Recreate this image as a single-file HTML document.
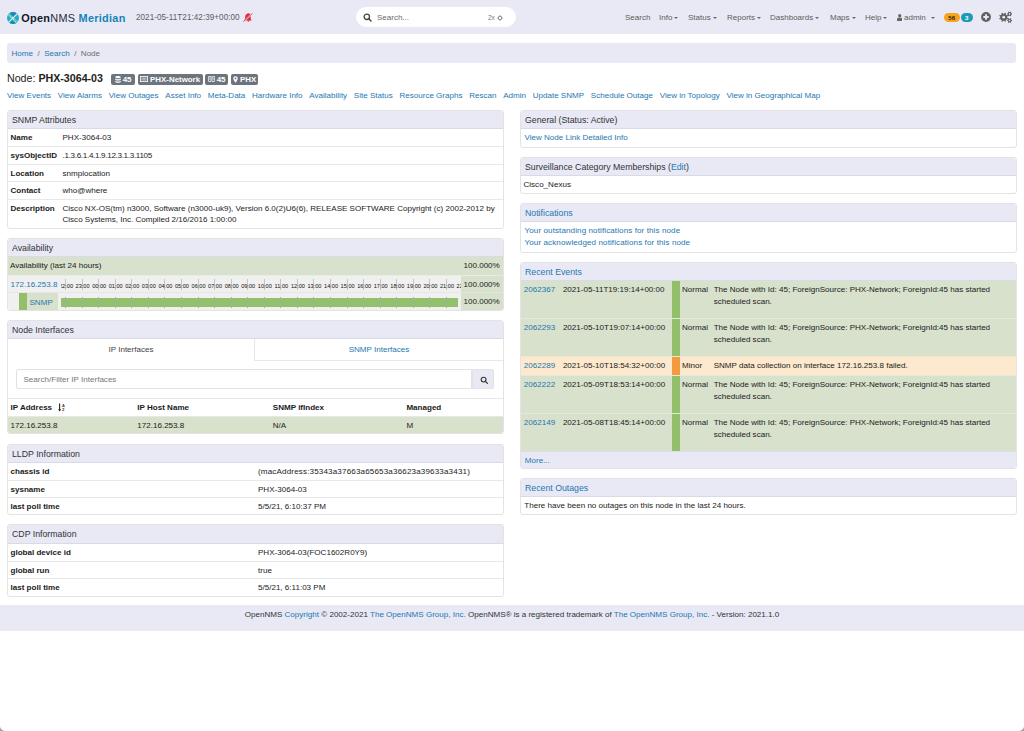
<!DOCTYPE html>
<html><head><meta charset="utf-8">
<style>
*{box-sizing:border-box;margin:0;padding:0}
html,body{width:1024px;height:731px;overflow:hidden;background:#fff}
body{font-family:"Liberation Sans",sans-serif;font-size:8.05px;line-height:11.7px;color:#1b1b1b;position:relative}
a{color:#2677b0;text-decoration:none}
.a{position:absolute;white-space:nowrap}
#hdr{left:0;top:0;width:1024px;height:34px;background:#e8e9f5}
.nav{top:12px;font-size:8px;line-height:12px;color:#5c5c5c}
.caret{display:inline-block;width:0;height:0;border-left:2.2px solid transparent;border-right:2.2px solid transparent;border-top:2.4px solid #666;vertical-align:1.5px;margin-left:2px}
.p{position:absolute;border:1px solid #e3e3e3;border-radius:3px;background:#fff;overflow:hidden}
.ph{position:absolute;left:0;top:0;right:0;background:#e8e9f5;border-bottom:1px solid #d8dae6;font-size:8.75px;line-height:17px;padding-left:4px;color:#333;white-space:nowrap}
.ln{position:absolute;left:0;right:0;height:1px;background:#e8e8e8}
.b{font-weight:bold}
.badge{top:74px;height:11px;background:#6c757d;color:#fff;border-radius:2px;font-weight:bold;font-size:7.9px;line-height:11px;text-align:center}
.l{margin-left:6.7px}
.tick{position:absolute;width:1px;background:#c4c4c4}
.tlab{position:absolute;top:5.5px;font-size:5.6px;line-height:9px;color:#111;transform:translateX(-50%)}
</style></head><body>
<!-- HEADER -->
<div id="hdr" class="a">
  <svg class="a" style="left:7px;top:11.5px" width="12" height="12" viewBox="0 0 12 12">
    <circle cx="6" cy="6" r="6" fill="#22abc6"/>
    <path d="M6 6 L1.76 1.76 A6 6 0 0 1 10.24 1.76 Z" fill="#168cb0"/>
    <path d="M6 6 L1.76 10.24 A6 6 0 0 0 10.24 10.24 Z" fill="#168cb0"/>
    <path d="M1.2 2.6 L9.4 10.8" stroke="#56d4b4" stroke-width="1.7"/>
    <path d="M2.3 1.5 L10.5 9.7 M1.5 2.3 L9.7 10.5" stroke="#e8e9f5" stroke-width="0.55"/>
    <path d="M10.6 1.4 L1.4 10.6" stroke="#e8e9f5" stroke-width="1.3"/>
    <circle cx="6" cy="6" r="1" fill="#e8e9f5"/>
  </svg>
  <div class="a" style="left:21.3px;top:10.5px;font-size:10.9px;line-height:14px;color:#14172a;letter-spacing:0.28px"><b>Open</b><span style="color:#2a2d3c">NMS</span> <b style="color:#1783b8">Meridian</b></div>
  <div class="a" style="left:136px;top:12px;font-size:8.15px;line-height:12px;color:#5e5e5e;letter-spacing:0.04px">2021-05-11T21:42:39+00:00</div>
  <svg class="a" style="left:243px;top:12.5px" width="10" height="9" viewBox="0 0 10 9">
    <path d="M5.3 0.3 C3.3 0.5 2.3 2.0 2.2 3.8 L2.1 5.4 L0.9 7.4 L8.6 7.4 L7.7 5.6 L7.6 3.7 C7.5 1.9 6.9 0.4 5.3 0.3 Z M4.4 7.8 L6.4 7.8 C6.3 8.5 5.9 8.8 5.4 8.8 C4.9 8.8 4.5 8.5 4.4 7.8 Z" fill="#e2283b"/>
    <path d="M0.4 8.9 L9.6 0.2" stroke="#e8e9f5" stroke-width="1.5"/>
    <path d="M0.5 8.6 L9.5 0.3" stroke="#e2283b" stroke-width="0.9"/>
  </svg>
  <!-- search -->
  <div class="a" style="left:356px;top:7px;width:160px;height:20px;border-radius:10px;background:#fff"></div>
  <svg class="a" style="left:363px;top:13px" width="9" height="9" viewBox="0 0 9 9"><circle cx="3.8" cy="3.8" r="2.7" fill="none" stroke="#444" stroke-width="1.3"/><path d="M5.8 5.8 L8 8" stroke="#444" stroke-width="1.5" stroke-linecap="round"/></svg>
  <div class="a" style="left:377px;top:12px;font-size:8px;line-height:12px;color:#6a6a6a">Search...</div>
  <div class="a" style="left:488px;top:11.5px;font-size:6.5px;line-height:12px;color:#777">2x</div>
  <svg class="a" style="left:497px;top:14.5px" width="6" height="6" viewBox="0 0 6 6"><circle cx="3" cy="3" r="1.8" fill="none" stroke="#777" stroke-width="0.9"/><path d="M3 0.3 v1 M3 4.7 v1 M0.3 3 h1 M4.7 3 h1" stroke="#777" stroke-width="0.7"/></svg>

  <div class="a nav" style="left:625px">Search</div>
  <div class="a nav" style="left:659px">Info<span class="caret"></span></div>
  <div class="a nav" style="left:688px">Status<span class="caret"></span></div>
  <div class="a nav" style="left:727px">Reports<span class="caret"></span></div>
  <div class="a nav" style="left:770px">Dashboards<span class="caret"></span></div>
  <div class="a nav" style="left:830px">Maps<span class="caret"></span></div>
  <div class="a nav" style="left:865px">Help<span class="caret"></span></div>
  <svg class="a" style="left:896.5px;top:14px" width="5.5" height="7" viewBox="0 0 5.5 7"><circle cx="2.75" cy="1.7" r="1.6" fill="#666"/><path d="M0 7 L0 5.2 C0 3.9 0.9 3.4 2.75 3.4 C4.6 3.4 5.5 3.9 5.5 5.2 L5.5 7 Z" fill="#666"/></svg>
  <div class="a nav" style="left:904px">admin <span class="caret" style="margin-left:3px"></span></div>
  <div class="a" style="left:944px;top:13px;width:15.5px;height:9px;border-radius:4.5px;background:#f7a41d;color:#2e2200;font-size:6.1px;line-height:9px;font-weight:bold;text-align:center">56</div>
  <div class="a" style="left:961px;top:13px;width:11.5px;height:9px;border-radius:4.5px;background:#1c9cb4;color:#fff;font-size:6.1px;line-height:9px;font-weight:bold;text-align:center">3</div>
  <svg class="a" style="left:981px;top:12px" width="10" height="10" viewBox="0 0 10 10"><circle cx="5" cy="5" r="4.9" fill="#5f5f5f"/><path d="M5 2.3 L5 7.7 M2.3 5 L7.7 5" stroke="#e8e9f5" stroke-width="1.9"/></svg>
  <svg class="a" style="left:999px;top:11px" width="14" height="13" viewBox="0 0 14 13">
    <path d="M8.20 6.20 L8.14 6.86 L9.17 7.30 L8.64 8.58 L7.60 8.16 L7.17 8.67 L6.66 9.10 L7.08 10.14 L5.80 10.67 L5.36 9.64 L4.70 9.70 L4.04 9.64 L3.60 10.67 L2.32 10.14 L2.74 9.10 L2.23 8.67 L1.80 8.16 L0.76 8.58 L0.23 7.30 L1.26 6.86 L1.20 6.20 L1.26 5.54 L0.23 5.10 L0.76 3.82 L1.80 4.24 L2.23 3.73 L2.74 3.30 L2.32 2.26 L3.60 1.73 L4.04 2.76 L4.70 2.70 L5.36 2.76 L5.80 1.73 L7.08 2.26 L6.66 3.30 L7.17 3.73 L7.60 4.24 L8.64 3.82 L9.17 5.10 L8.14 5.54Z" fill="#5f5f5f"/><circle cx="4.7" cy="6.2" r="1.4" fill="#e8e9f5"/>
    <path d="M12.16 2.00 L12.32 2.37 L13.04 2.35 L13.04 3.45 L12.32 3.43 L12.16 3.80 L11.92 4.12 L12.30 4.74 L11.34 5.29 L11.00 4.66 L10.60 4.70 L10.20 4.66 L9.86 5.29 L8.90 4.74 L9.28 4.12 L9.04 3.80 L8.88 3.43 L8.16 3.45 L8.16 2.35 L8.88 2.37 L9.04 2.00 L9.28 1.68 L8.90 1.06 L9.86 0.51 L10.20 1.14 L10.60 1.10 L11.00 1.14 L11.34 0.51 L12.30 1.06 L11.92 1.68Z" fill="#5f5f5f"/><circle cx="10.6" cy="2.9" r="0.8" fill="#e8e9f5"/>
    <path d="M12.16 8.60 L12.32 8.97 L13.04 8.95 L13.04 10.05 L12.32 10.03 L12.16 10.40 L11.92 10.72 L12.30 11.34 L11.34 11.89 L11.00 11.26 L10.60 11.30 L10.20 11.26 L9.86 11.89 L8.90 11.34 L9.28 10.72 L9.04 10.40 L8.88 10.03 L8.16 10.05 L8.16 8.95 L8.88 8.97 L9.04 8.60 L9.28 8.28 L8.90 7.66 L9.86 7.11 L10.20 7.74 L10.60 7.70 L11.00 7.74 L11.34 7.11 L12.30 7.66 L11.92 8.28Z" fill="#5f5f5f"/><circle cx="10.6" cy="9.5" r="0.8" fill="#e8e9f5"/>
  </svg>
</div>
<div class="a" style="left:7px;top:43px;width:1009px;height:20px;background:#e8e9f5;border-radius:3px"></div>
<div class="a" style="left:11.5px;top:47.5px;color:#6c6c6c"><a href="#">Home</a>&nbsp; /&nbsp; <a href="#">Search</a>&nbsp; /&nbsp; Node</div>
<div class="a" style="left:7px;top:71px;font-size:10.66px;line-height:14px;color:#222">Node: <b>PHX-3064-03</b></div>

<div class="a badge" style="left:111px;width:24px">
  <svg width="6" height="7" viewBox="0 0 6 7" style="vertical-align:-1px"><ellipse cx="3" cy="1.2" rx="2.8" ry="1.1" fill="#fff"/><path d="M0.2 2.2 v1.3 c0 .6 1.3 1.1 2.8 1.1 s2.8 -.5 2.8 -1.1 v-1.3 c0 .6 -1.3 1.1 -2.8 1.1 s-2.8 -.5 -2.8 -1.1z M0.2 4.4 v1.3 c0 .6 1.3 1.1 2.8 1.1 s2.8 -.5 2.8 -1.1 v-1.3 c0 .6 -1.3 1.1 -2.8 1.1 s-2.8 -.5 -2.8 -1.1z" fill="#fff"/></svg> 45</div>
<div class="a badge" style="left:137.5px;width:65px">
  <svg width="8" height="6" viewBox="0 0 8 6" style="vertical-align:0px"><rect x="0.4" y="0.4" width="7.2" height="5.2" fill="none" stroke="#fff" stroke-width="0.8"/><path d="M1.5 2 h5 M1.5 3 h5 M1.5 4 h5" stroke="#fff" stroke-width="0.5"/></svg> PHX-Network</div>
<div class="a badge" style="left:205px;width:23px">
  <svg width="7" height="6" viewBox="0 0 7 6" style="vertical-align:0px"><path d="M0.5 0.5 h2.5 v5 h-2.5z M4 0.5 h2.5 v5 h-2.5z" fill="none" stroke="#fff" stroke-width="0.7"/><path d="M1 2 h1.5 M1 3.2 h1.5 M4.5 2 h1.5 M4.5 3.2 h1.5" stroke="#fff" stroke-width="0.5"/></svg> 45</div>
<div class="a badge" style="left:231px;width:27px">
  <svg width="5" height="7" viewBox="0 0 5 7" style="vertical-align:-1px"><path d="M2.5 0.3 C1.2 0.3 0.3 1.2 0.3 2.4 C0.3 3.8 2.5 6.7 2.5 6.7 C2.5 6.7 4.7 3.8 4.7 2.4 C4.7 1.2 3.8 0.3 2.5 0.3 Z" fill="#fff"/><circle cx="2.5" cy="2.4" r="0.9" fill="#6c757d"/></svg> PHX</div>

<div class="a" style="left:7px;top:89.5px"><a href="#">View Events</a><a href="#" class=l>View Alarms</a><a href="#" class=l>View Outages</a><a href="#" class=l>Asset Info</a><a href="#" class=l>Meta-Data</a><a href="#" class=l>Hardware Info</a><a href="#" class=l>Availability</a><a href="#" class=l>Site Status</a><a href="#" class=l>Resource Graphs</a><a href="#" class=l>Rescan</a><a href="#" class=l>Admin</a><a href="#" class=l>Update SNMP</a><a href="#" class=l>Schedule Outage</a><a href="#" class=l>View in Topology</a><a href="#" class=l>View in Geographical Map</a></div>
<div class="p" style="left:7px;top:110px;width:497px;height:119px">
  <div class="ph" style="height:18px;line-height:18px">SNMP Attributes</div>
  <div class="a b" style="left:2.5px;top:20.50px;">Name</div>
  <div class="a" style="left:54.5px;top:20.50px;">PHX-3064-03</div>
  <div class="ln" style="top:35px"></div>
  <div class="a b" style="left:2.5px;top:38.50px;">sysObjectID</div>
  <div class="a" style="left:54.5px;top:38.50px;"><span style="letter-spacing:-0.3px">.1.3.6.1.4.1.9.12.3.1.3.1105</span></div>
  <div class="ln" style="top:53px"></div>
  <div class="a b" style="left:2.5px;top:56.50px;">Location</div>
  <div class="a" style="left:54.5px;top:56.50px;">snmplocation</div>
  <div class="ln" style="top:70px"></div>
  <div class="a b" style="left:2.5px;top:73.50px;">Contact</div>
  <div class="a" style="left:54.5px;top:73.50px;">who@where</div>
  <div class="ln" style="top:88px"></div>
  <div class="a b" style="left:2.5px;top:91.50px;">Description</div>
  <div class="a" style="left:54.5px;top:91.50px;">Cisco NX-OS(tm) n3000, Software (n3000-uk9), Version 6.0(2)U6(6), RELEASE SOFTWARE Copyright (c) 2002-2012 by<br>Cisco Systems, Inc. Compiled 2/16/2016 1:00:00</div>
</div>
<div class="p" style="left:7px;top:238px;width:497px;height:73px">
  <div class="ph" style="height:18px;line-height:18px">Availability</div>
  <div class="a" style="left:0px;top:18px;width:495px;height:18px;background:#d7e1cc;"></div>
  <div class="a" style="left:2px;top:20.50px;">Availability (last 24 hours)</div>
  <div class="a" style="left:455.5px;top:20.50px;">100.000%</div>
  <div class="a" style="left:0px;top:36px;width:453px;height:35px;background:#f0f0f0;"></div>
  <div class="a" style="left:453px;top:36px;width:42px;height:35px;background:#d7e1cc;"></div>
  <div class="ln" style="top:36px;background:#e9ece6"></div>
  <div class="a" style="left:0px;top:53px;width:453px;height:1px;background:#e6e6e6;"></div>
  <div class="a" style="left:453px;top:53px;width:42px;height:1px;background:#e0e6da;"></div>
  <div class="a" style="left:2.5px;top:39.50px;"><a href="#">172.16.253.8</a></div>
  <div class="a" style="left:455.5px;top:39.50px;">100.000%</div>
  <div class="a" style="left:455.5px;top:57.00px;">100.000%</div>
  <div class="a" style="left:11px;top:54px;width:8px;height:17px;background:#93be6a;"></div>
  <div class="a" style="left:19px;top:54px;width:31px;height:17px;background:#d7e1cc;"></div>
  <div class="a" style="left:21.5px;top:57.50px;"><a href="#">SNMP</a></div>
  <div class="a" style="left:53px;top:37px;width:400px;height:16.5px;overflow:hidden"><div class="tick" style="left:4px;top:3px;height:11px"></div><div class="tick" style="left:21px;top:3px;height:11px"></div><div class="tick" style="left:37px;top:3px;height:11px"></div><div class="tick" style="left:54px;top:3px;height:11px"></div><div class="tick" style="left:70px;top:3px;height:11px"></div><div class="tick" style="left:87px;top:3px;height:11px"></div><div class="tick" style="left:103px;top:3px;height:11px"></div><div class="tick" style="left:120px;top:3px;height:11px"></div><div class="tick" style="left:137px;top:3px;height:11px"></div><div class="tick" style="left:153px;top:3px;height:11px"></div><div class="tick" style="left:170px;top:3px;height:11px"></div><div class="tick" style="left:186px;top:3px;height:11px"></div><div class="tick" style="left:203px;top:3px;height:11px"></div><div class="tick" style="left:219px;top:3px;height:11px"></div><div class="tick" style="left:236px;top:3px;height:11px"></div><div class="tick" style="left:252px;top:3px;height:11px"></div><div class="tick" style="left:269px;top:3px;height:11px"></div><div class="tick" style="left:286px;top:3px;height:11px"></div><div class="tick" style="left:302px;top:3px;height:11px"></div><div class="tick" style="left:319px;top:3px;height:11px"></div><div class="tick" style="left:335px;top:3px;height:11px"></div><div class="tick" style="left:352px;top:3px;height:11px"></div><div class="tick" style="left:368px;top:3px;height:11px"></div><div class="tick" style="left:385px;top:3px;height:11px"></div><div class="tick" style="left:402px;top:3px;height:11px"></div><div class="tlab" style="left:5.00px">22:00</div><div class="tlab" style="left:21.56px">23:00</div><div class="tlab" style="left:38.13px">00:00</div><div class="tlab" style="left:54.70px">01:00</div><div class="tlab" style="left:71.26px">02:00</div><div class="tlab" style="left:87.82px">03:00</div><div class="tlab" style="left:104.39px">04:00</div><div class="tlab" style="left:120.96px">05:00</div><div class="tlab" style="left:137.52px">06:00</div><div class="tlab" style="left:154.09px">07:00</div><div class="tlab" style="left:170.65px">08:00</div><div class="tlab" style="left:187.22px">09:00</div><div class="tlab" style="left:203.78px">10:00</div><div class="tlab" style="left:220.35px">11:00</div><div class="tlab" style="left:236.91px">12:00</div><div class="tlab" style="left:253.48px">13:00</div><div class="tlab" style="left:270.04px">14:00</div><div class="tlab" style="left:286.61px">15:00</div><div class="tlab" style="left:303.17px">16:00</div><div class="tlab" style="left:319.74px">17:00</div><div class="tlab" style="left:336.30px">18:00</div><div class="tlab" style="left:352.87px">19:00</div><div class="tlab" style="left:369.43px">20:00</div><div class="tlab" style="left:386.00px">21:00</div><div class="tlab" style="left:402.56px">22:00</div></div>
  <div class="a" style="left:53px;top:59px;width:397px;height:9px;background:#93c06a;"></div>
  <div class="a" style="left:57px;top:58px;width:1px;height:10.5px;background:#a3b196;"></div>
  <div class="a" style="left:74px;top:58px;width:1px;height:10.5px;background:#a3b196;"></div>
  <div class="a" style="left:90px;top:58px;width:1px;height:10.5px;background:#a3b196;"></div>
  <div class="a" style="left:107px;top:58px;width:1px;height:10.5px;background:#a3b196;"></div>
  <div class="a" style="left:123px;top:58px;width:1px;height:10.5px;background:#a3b196;"></div>
  <div class="a" style="left:140px;top:58px;width:1px;height:10.5px;background:#a3b196;"></div>
  <div class="a" style="left:156px;top:58px;width:1px;height:10.5px;background:#a3b196;"></div>
  <div class="a" style="left:173px;top:58px;width:1px;height:10.5px;background:#a3b196;"></div>
  <div class="a" style="left:190px;top:58px;width:1px;height:10.5px;background:#a3b196;"></div>
  <div class="a" style="left:206px;top:58px;width:1px;height:10.5px;background:#a3b196;"></div>
  <div class="a" style="left:223px;top:58px;width:1px;height:10.5px;background:#a3b196;"></div>
  <div class="a" style="left:239px;top:58px;width:1px;height:10.5px;background:#a3b196;"></div>
  <div class="a" style="left:256px;top:58px;width:1px;height:10.5px;background:#a3b196;"></div>
  <div class="a" style="left:272px;top:58px;width:1px;height:10.5px;background:#a3b196;"></div>
  <div class="a" style="left:289px;top:58px;width:1px;height:10.5px;background:#a3b196;"></div>
  <div class="a" style="left:305px;top:58px;width:1px;height:10.5px;background:#a3b196;"></div>
  <div class="a" style="left:322px;top:58px;width:1px;height:10.5px;background:#a3b196;"></div>
  <div class="a" style="left:339px;top:58px;width:1px;height:10.5px;background:#a3b196;"></div>
  <div class="a" style="left:355px;top:58px;width:1px;height:10.5px;background:#a3b196;"></div>
  <div class="a" style="left:372px;top:58px;width:1px;height:10.5px;background:#a3b196;"></div>
  <div class="a" style="left:388px;top:58px;width:1px;height:10.5px;background:#a3b196;"></div>
  <div class="a" style="left:405px;top:58px;width:1px;height:10.5px;background:#a3b196;"></div>
  <div class="a" style="left:421px;top:58px;width:1px;height:10.5px;background:#a3b196;"></div>
  <div class="a" style="left:438px;top:58px;width:1px;height:10.5px;background:#a3b196;"></div>
</div>
<div class="p" style="left:7px;top:320px;width:497px;height:114px">
  <div class="ph" style="height:18px;line-height:18px">Node Interfaces</div>
  <div class="a" style="left:246px;top:18px;width:260px;height:22px;border-left:1px solid #e8e8e8;border-bottom:1px solid #e8e8e8"></div>
  <div class="a" style="left:0;top:18px;width:246px;height:21px;text-align:center;line-height:21px;color:#444">IP Interfaces</div>
  <div class="a" style="left:247px;top:18px;width:248px;height:21px;text-align:center;line-height:21px"><a href="#">SNMP Interfaces</a></div>
  <div class="a" style="left:8px;top:48px;width:456px;height:20px;border:1px solid #e2e2e2;border-radius:2px 0 0 2px"></div>
  <div class="a" style="left:15.5px;top:53.00px;"><span style="color:#777">Search/Filter IP Interfaces</span></div>
  <div class="a" style="left:464px;top:48px;width:22px;height:20px;border:1px solid #e2e2e2;border-radius:0 2px 2px 0;background:#e8e9f5"></div>
  <svg class="a" style="left:471.5px;top:54.5px" width="9" height="9" viewBox="0 0 9 9"><circle cx="3.6" cy="3.6" r="2.4" fill="none" stroke="#3a3a3a" stroke-width="1.15"/><path d="M5.4 5.4 L7.4 7.4" stroke="#3a3a3a" stroke-width="1.3" stroke-linecap="round"/></svg>
  <div class="ln" style="top:77px"></div>
  <div class="a b" style="left:2.5px;top:80.50px;">IP Address</div>
  <div class="a b" style="left:129.3px;top:80.50px;">IP Host Name</div>
  <div class="a b" style="left:264.8px;top:80.50px;">SNMP ifIndex</div>
  <div class="a b" style="left:398.4px;top:80.50px;">Managed</div>
  <svg class="a" style="left:49px;top:82px" width="9" height="9" viewBox="0 0 9 9"><path d="M2.6 0.4 v7.2" stroke="#222" stroke-width="1.1" fill="none"/><path d="M1.1 6.2 L2.6 8.4 L4.1 6.2 Z" fill="#222"/><text x="4.9" y="3.6" font-size="3.9" font-weight="bold" font-family="Liberation Sans" fill="#333">A</text><text x="4.9" y="8.4" font-size="3.9" font-weight="bold" font-family="Liberation Sans" fill="#333">Z</text></svg>
  <div class="a" style="left:0px;top:95px;width:495px;height:17px;background:#d7e1cc;"></div>
  <div class="ln" style="top:95px"></div>
  <div class="a" style="left:2.5px;top:98.50px;">172.16.253.8</div>
  <div class="a" style="left:129.3px;top:98.50px;">172.16.253.8</div>
  <div class="a" style="left:264.8px;top:98.50px;">N/A</div>
  <div class="a" style="left:398.4px;top:98.50px;">M</div>
</div>
<div class="p" style="left:7px;top:444px;width:497px;height:71px">
  <div class="ph" style="height:18px;line-height:18px">LLDP Information</div>
  <div class="a b" style="left:2.5px;top:20.50px;">chassis id</div>
  <div class="a" style="left:250px;top:20.50px;"><span style="letter-spacing:0.16px">(macAddress:35343a37663a65653a36623a39633a3431)</span></div>
  <div class="ln" style="top:35px"></div>
  <div class="a b" style="left:2.5px;top:38.50px;">sysname</div>
  <div class="a" style="left:250px;top:38.50px;">PHX-3064-03</div>
  <div class="ln" style="top:52px"></div>
  <div class="a b" style="left:2.5px;top:55.50px;">last poll time</div>
  <div class="a" style="left:250px;top:55.50px;">5/5/21, 6:10:37 PM</div>
</div>
<div class="p" style="left:7px;top:524px;width:497px;height:73px">
  <div class="ph" style="height:19px;line-height:19px">CDP Information</div>
  <div class="a b" style="left:2.5px;top:21.50px;">global device id</div>
  <div class="a" style="left:250px;top:21.50px;">PHX-3064-03(FOC1602R0Y9)</div>
  <div class="ln" style="top:36px"></div>
  <div class="a b" style="left:2.5px;top:39.50px;">global run</div>
  <div class="a" style="left:250px;top:39.50px;">true</div>
  <div class="ln" style="top:53px"></div>
  <div class="a b" style="left:2.5px;top:56.50px;">last poll time</div>
  <div class="a" style="left:250px;top:56.50px;">5/5/21, 6:11:03 PM</div>
</div>
<div class="p" style="left:520px;top:110px;width:497px;height:38px">
  <div class="ph" style="height:18px;line-height:18px">General (Status: Active)</div>
  <div class="a" style="left:3.5px;top:20.50px;"><a href="#">View Node Link Detailed Info</a></div>
</div>
<div class="p" style="left:520px;top:157px;width:497px;height:37px">
  <div class="ph" style="height:18px;line-height:18px">Surveillance Category Memberships (<a href="#">Edit</a>)</div>
  <div class="a" style="left:2.5px;top:20.50px;">Cisco_Nexus</div>
</div>
<div class="p" style="left:520px;top:203px;width:497px;height:50px">
  <div class="ph" style="height:18px;line-height:18px"><a href="#">Notifications</a></div>
  <div class="a" style="left:3.5px;top:20.50px;line-height:12px;letter-spacing:0.1px"><a href="#">Your outstanding notifications for this node</a><br><a href="#">Your acknowledged notifications for this node</a></div>
</div>
<div class="p" style="left:520px;top:262px;width:497px;height:207px">
  <div class="ph" style="height:18px;line-height:18px"><a href="#">Recent Events</a></div>
  <div class="a" style="left:0px;top:18px;width:495px;height:38px;background:#d7e1cc;"></div>
  <div class="a" style="left:151px;top:18px;width:8px;height:38px;background:#93be6a;"></div>
  <div class="a" style="left:2.8px;top:20.50px;"><a href="#">2062367</a></div>
  <div class="a" style="left:41.9px;top:20.50px;">2021-05-11T19:19:14+00:00</div>
  <div class="a" style="left:161px;top:20.50px;">Normal</div>
  <div class="a" style="left:192.7px;top:20.50px;line-height:12px">The Node with Id: 45; ForeignSource: PHX-Network; ForeignId:45 has started<br>scheduled scan.</div>
  <div class="a" style="left:0px;top:56px;width:495px;height:38px;background:#d7e1cc;"></div>
  <div class="a" style="left:151px;top:56px;width:8px;height:38px;background:#93be6a;"></div>
  <div class="ln" style="top:55px;background:#e3e9dc"></div>
  <div class="a" style="left:2.8px;top:58.50px;"><a href="#">2062293</a></div>
  <div class="a" style="left:41.9px;top:58.50px;">2021-05-10T19:07:14+00:00</div>
  <div class="a" style="left:161px;top:58.50px;">Normal</div>
  <div class="a" style="left:192.7px;top:58.50px;line-height:12px">The Node with Id: 45; ForeignSource: PHX-Network; ForeignId:45 has started<br>scheduled scan.</div>
  <div class="a" style="left:0px;top:94px;width:495px;height:19px;background:#fde9cd;"></div>
  <div class="a" style="left:151px;top:94px;width:8px;height:19px;background:#f39a3f;"></div>
  <div class="ln" style="top:93px;background:#f3e5d0"></div>
  <div class="a" style="left:2.8px;top:96.50px;"><a href="#">2062289</a></div>
  <div class="a" style="left:41.9px;top:96.50px;">2021-05-10T18:54:32+00:00</div>
  <div class="a" style="left:161px;top:96.50px;">Minor</div>
  <div class="a" style="left:192.7px;top:96.50px;line-height:12px">SNMP data collection on interface 172.16.253.8 failed.</div>
  <div class="a" style="left:0px;top:113px;width:495px;height:38px;background:#d7e1cc;"></div>
  <div class="a" style="left:151px;top:113px;width:8px;height:38px;background:#93be6a;"></div>
  <div class="ln" style="top:112px;background:#e3e9dc"></div>
  <div class="a" style="left:2.8px;top:115.50px;"><a href="#">2062222</a></div>
  <div class="a" style="left:41.9px;top:115.50px;">2021-05-09T18:53:14+00:00</div>
  <div class="a" style="left:161px;top:115.50px;">Normal</div>
  <div class="a" style="left:192.7px;top:115.50px;line-height:12px">The Node with Id: 45; ForeignSource: PHX-Network; ForeignId:45 has started<br>scheduled scan.</div>
  <div class="a" style="left:0px;top:151px;width:495px;height:38px;background:#d7e1cc;"></div>
  <div class="a" style="left:151px;top:151px;width:8px;height:38px;background:#93be6a;"></div>
  <div class="ln" style="top:150px;background:#e3e9dc"></div>
  <div class="a" style="left:2.8px;top:153.50px;"><a href="#">2062149</a></div>
  <div class="a" style="left:41.9px;top:153.50px;">2021-05-08T18:45:14+00:00</div>
  <div class="a" style="left:161px;top:153.50px;">Normal</div>
  <div class="a" style="left:192.7px;top:153.50px;line-height:12px">The Node with Id: 45; ForeignSource: PHX-Network; ForeignId:45 has started<br>scheduled scan.</div>
  <div class="a" style="left:0px;top:189px;width:495px;height:16px;background:#e8e9f5;"></div>
  <div class="ln" style="top:188px;background:#dcdfe9"></div>
  <div class="a" style="left:3.8px;top:191.50px;"><a href="#">More...</a></div>
</div>
<div class="p" style="left:520px;top:478px;width:497px;height:37px">
  <div class="ph" style="height:18px;line-height:18px"><a href="#">Recent Outages</a></div>
  <div class="a" style="left:3.3px;top:20.50px;">There have been no outages on this node in the last 24 hours.</div>
</div>
<div class="a" style="left:0;top:605px;width:1024px;height:25.5px;background:#e8e9f5"></div>
<div class="a" style="left:0;top:609px;width:1024px;text-align:center;color:#333">OpenNMS <a href="#">Copyright</a> &copy; 2002-2021 <a href="#">The OpenNMS Group, Inc.</a> OpenNMS&reg; is a registered trademark of <a href="#">The OpenNMS Group, Inc.</a> - Version: 2021.1.0</div>
<svg class="a" style="left:0;top:726px" width="5" height="5" viewBox="0 0 5 5"><path d="M0 0 A5 5 0 0 0 5 5 L0 5 Z" fill="#a0a0a0"/></svg>
<svg class="a" style="left:1019px;top:726px" width="5" height="5" viewBox="0 0 5 5"><path d="M5 0 A5 5 0 0 1 0 5 L5 5 Z" fill="#a0a0a0"/></svg>
</body></html>
